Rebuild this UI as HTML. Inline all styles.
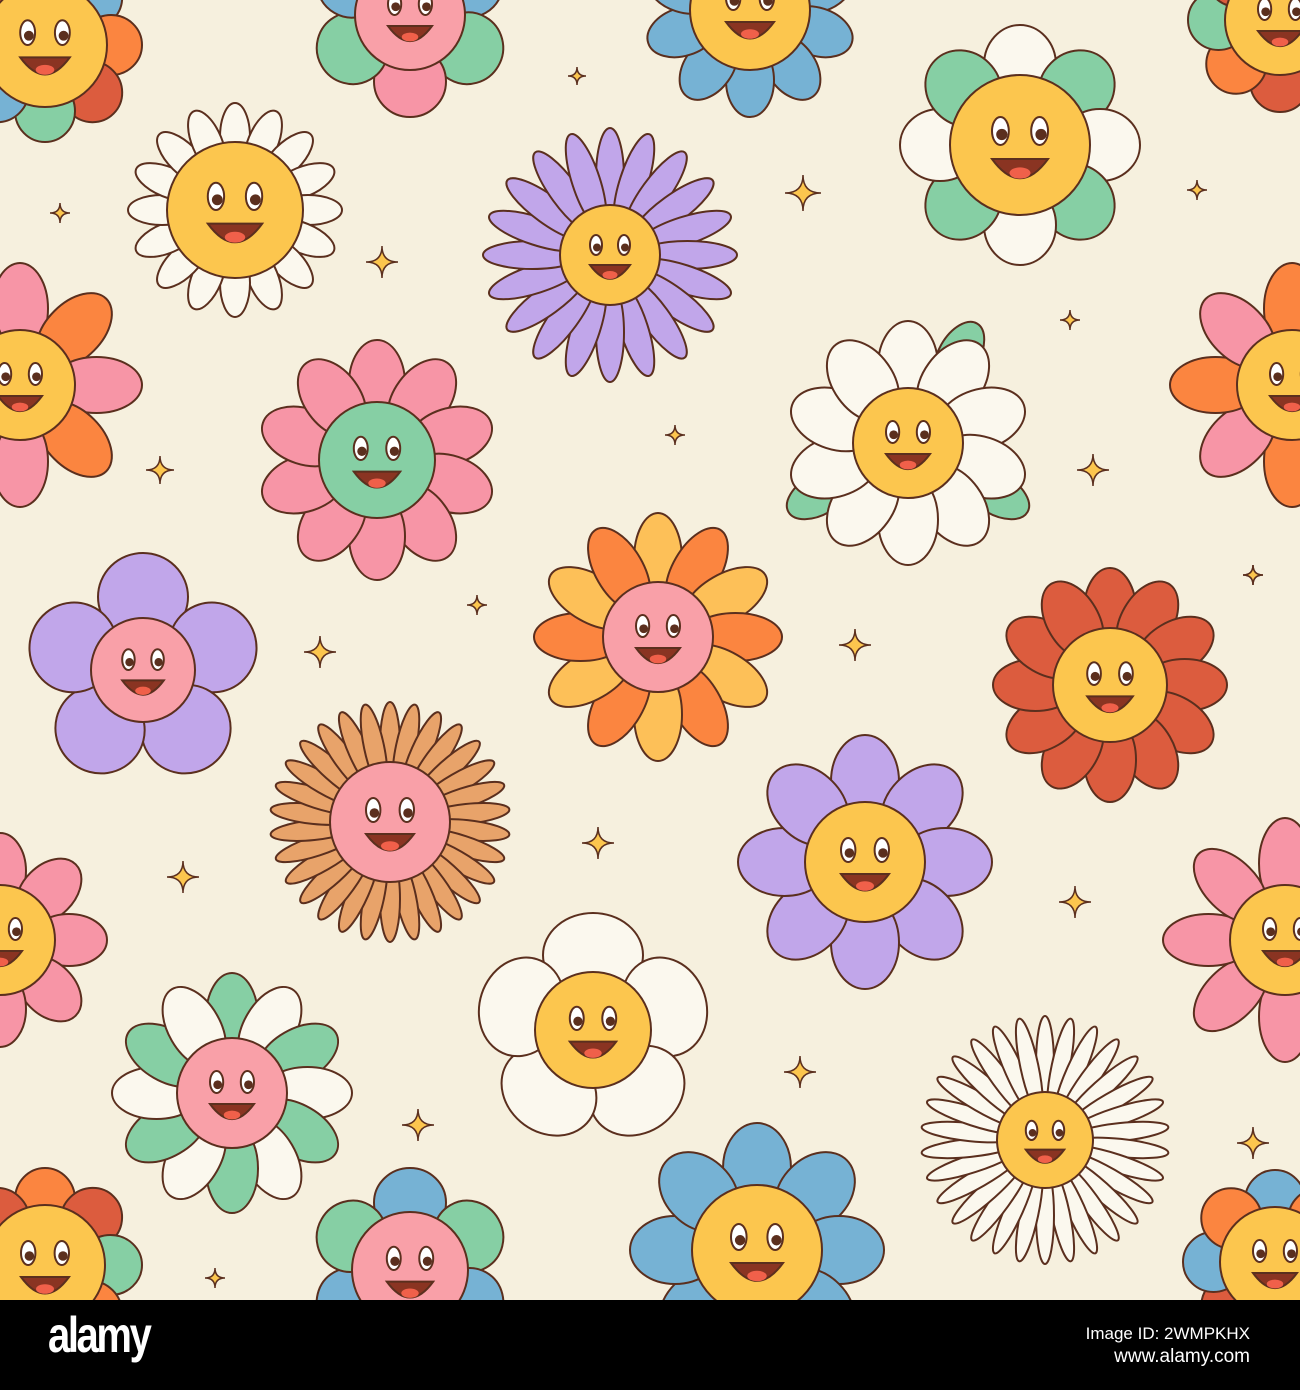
<!DOCTYPE html>
<html><head><meta charset="utf-8"><style>
body{margin:0;width:1300px;height:1390px;overflow:hidden;background:#000}
#art{position:absolute;left:0;top:0}
.bar{position:absolute;left:0;top:1300px;width:1300px;height:90px;background:#000}
.logo{position:absolute;left:48px;top:1306px;color:#fff;font:bold 50px "Liberation Sans Narrow","Liberation Sans",sans-serif;letter-spacing:-3px;transform:scaleX(.8);transform-origin:left}
.r{position:absolute;right:50px;color:#fff;font:16px "Liberation Sans Narrow","Liberation Sans",sans-serif;text-align:right}
</style></head><body>
<svg id="art" width="1300" height="1300" viewBox="0 0 1300 1300"><rect width="1300" height="1300" fill="#f6f0de"/><g id="g"></g></svg>
<div class="logo">alamy</div>
<div class="r" style="top:1324px;font-size:17px">Image ID: 2WMPKHX</div>
<div class="r" style="top:1346px;font-size:19px">www.alamy.com</div>
<script>
const S='#5b2f1e';
const C={o:'#fb8540',y:'#fdc058',p:'#f795a6',g:'#86cfa4',b:'#76b2d4',w:'#fbf8ee',v:'#c1a6ea',r:'#dc5c3e',t:'#e8a36a',pf:'#f9a0a8',yf:'#fcc64e',gf:'#86cfa4'};
let h='';
function fl(x,y,R,r,n,cols,face,pw,leaves){
 let s='';
 if(leaves){for(const a of [-60,30,150]){s+=`<ellipse cx="${x+Math.cos(a*Math.PI/180)*R*0.85}" cy="${y+Math.sin(a*Math.PI/180)*R*0.85}" rx="${R*0.3}" ry="${R*0.17}" transform="rotate(${a} ${x+Math.cos(a*Math.PI/180)*R*0.85} ${y+Math.sin(a*Math.PI/180)*R*0.85})" fill="#86cfa4" stroke="${S}" stroke-width="2"/>`}}
 for(let i=0;i<n;i++){const a=-90+i*360/n;const d=(R+r*0.6)/2;const cx=x+Math.cos(a*Math.PI/180)*d,cy=y+Math.sin(a*Math.PI/180)*d;
  s+=`<ellipse cx="${cx}" cy="${cy}" rx="${(R-r*0.6)/2+2}" ry="${pw}" transform="rotate(${a} ${cx} ${cy})" fill="${cols[i%cols.length]}" stroke="${S}" stroke-width="2"/>`}
 s+=`<circle cx="${x}" cy="${y}" r="${r}" fill="${face}" stroke="${S}" stroke-width="2"/>`;
 const e=r*0.2;
 s+=`<ellipse cx="${x-r*0.28}" cy="${y-r*0.2}" rx="${e*0.6}" ry="${e}" fill="#fff" stroke="${S}" stroke-width="2"/><ellipse cx="${x+r*0.28}" cy="${y-r*0.2}" rx="${e*0.6}" ry="${e}" fill="#fff" stroke="${S}" stroke-width="2"/>`;
 s+=`<circle cx="${x-r*0.26}" cy="${y-r*0.15}" r="${e*0.4}" fill="${S}"/><circle cx="${x+r*0.3}" cy="${y-r*0.15}" r="${e*0.4}" fill="${S}"/>`;
 s+=`<path d="M${x-r*0.4} ${y+r*0.2} Q${x} ${y+r*0.75} ${x+r*0.4} ${y+r*0.2} Z" fill="#8a3422" stroke="${S}" stroke-width="2"/><ellipse cx="${x}" cy="${y+r*0.4}" rx="${r*0.15}" ry="${r*0.08}" fill="#f0604a"/>`;
 h+=s;
}
function sp(x,y,k){h+=`<path d="M${x} ${y-k}Q${x} ${y} ${x+k} ${y}Q${x} ${y} ${x} ${y+k}Q${x} ${y} ${x-k} ${y}Q${x} ${y} ${x} ${y-k}Z" fill="#fcc64e" stroke="${S}" stroke-width="1.5"/>`}
fl(45,45,95,62,8,[C.g,C.b,C.o,C.r],C.yf,30);
fl(410,15,100,55,6,[C.g,C.b,C.g,C.p],C.pf,36);
fl(750,10,105,60,10,[C.b],C.yf,24);
fl(1020,145,118,70,8,[C.w,C.g],C.yf,36);
fl(1280,20,90,55,8,[C.g,C.r,C.o],C.yf,30);
fl(235,210,105,68,16,[C.w],C.yf,15);
fl(610,255,125,50,20,[C.v],C.yf,14);
fl(20,385,120,55,8,[C.p,C.o],C.yf,28);
fl(1292,385,120,55,8,[C.o,C.p],C.yf,28);
fl(377,460,118,58,10,[C.p],C.gf,28);
fl(908,443,120,55,10,[C.w],C.yf,30,1);
fl(658,637,122,55,12,[C.y,C.o],C.pf,24);
fl(143,670,115,52,5,[C.v],C.pf,45);
fl(1110,685,115,57,12,[C.r],C.yf,26);
fl(390,822,118,60,30,[C.t],C.pf,10);
fl(865,862,125,60,8,[C.v],C.yf,34);
fl(0,940,105,55,8,[C.p],C.yf,26);
fl(1285,940,120,55,8,[C.p],C.yf,26);
fl(593,1030,115,58,5,[C.w],C.yf,50);
fl(232,1093,118,55,12,[C.g,C.w],C.pf,26);
fl(1045,1140,122,48,30,[C.w],C.yf,9);
fl(757,1250,125,65,8,[C.b],C.yf,34);
fl(410,1270,100,58,6,[C.b,C.g],C.pf,36);
fl(45,1265,95,60,8,[C.o,C.r,C.g],C.yf,30);
fl(1275,1262,90,55,8,[C.b,C.o,C.r],C.yf,30);
[[577,76,9],[803,193,18],[60,213,10],[382,262,16],[1197,190,10],[1070,320,10],[675,435,10],[160,470,14],[1093,470,16],[477,605,10],[855,645,16],[320,652,16],[1253,575,10],[1253,575,10],[598,843,16],[183,877,16],[1075,902,16],[418,1125,16],[800,1072,16],[1253,1143,16],[215,1278,10]].forEach(a=>sp(...a));
document.getElementById('g').innerHTML=h;
</script>
</body></html>
